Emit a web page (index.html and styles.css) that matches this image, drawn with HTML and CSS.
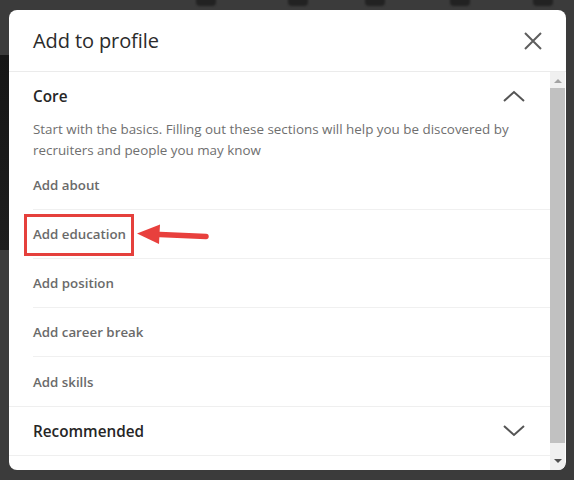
FILE: index.html
```html
<!DOCTYPE html>
<html>
<head>
<meta charset="utf-8">
<link rel="stylesheet" href="styles.css">
</head>
<body>
<div class="backdrop-icons">
  <span class="bi bi1"></span><span class="bi bi2"></span><span class="bi bi3"></span><span class="bi bi4"></span><span class="bi bi5"></span>
</div>
<div class="modal">
  <div class="modal-header">
    <h2 class="title">Add to profile</h2>
    <svg class="close" width="18" height="18" viewBox="0 0 18 18"><path d="M1 1L17 17M17 1L1 17" stroke="#5e5e5e" stroke-width="2" fill="none"/></svg>
  </div>
  <div class="modal-body">
    <div class="content">
      <section class="section">
        <div class="section-head core-head">
          <span class="section-title">Core</span>
          <svg class="chev" width="22" height="12" viewBox="0 0 22 12"><path d="M1 11L11 2L21 11" stroke="#555" stroke-width="2" fill="none"/></svg>
        </div>
        <p class="desc">Start with the basics. Filling out these sections will help you be discovered by recruiters and people you may know</p>
        <ul class="items">
          <li class="item">Add about</li>
          <li class="item highlighted">Add education
            <span class="hl-box"></span>
            <svg class="arrow" width="74" height="24" viewBox="0 0 74 24"><path d="M24 11.5L70 13.5" stroke="#e8403d" stroke-width="5.5" stroke-linecap="round" fill="none"/><path d="M1 10.5L24 1.5L23 21Z" fill="#e8403d"/></svg>
          </li>
          <li class="item">Add position</li>
          <li class="item">Add career break</li>
          <li class="item last">Add skills</li>
        </ul>
      </section>
      <section class="section">
        <div class="section-head">
          <span class="section-title">Recommended</span>
          <svg class="chev" width="22" height="12" viewBox="0 0 22 12"><path d="M1 1L11 10L21 1" stroke="#555" stroke-width="2" fill="none"/></svg>
        </div>
      </section>
    </div>
    <div class="scrollbar">
      <span class="sb-arrow up"></span>
      <span class="sb-thumb"></span>
      <span class="sb-arrow down"></span>
    </div>
  </div>
</div>
</body>
</html>
```
FILE: styles.css
```css
html, body {
  margin: 0;
  padding: 0;
}
body {
  width: 574px;
  height: 480px;
  overflow: hidden;
  position: relative;
  background:
    linear-gradient(#161616, #1e1e1e) 0 55px / 9px 195px no-repeat,
    #3b3b3b;
  font-family: "Open Sans", "Noto Sans", sans-serif;
  padding-top: 10px;
  box-sizing: border-box;
}
.backdrop-icons .bi {
  position: absolute;
  top: -6px;
  width: 20px;
  height: 12px;
  background: #222;
  border-radius: 4px;
  filter: blur(1px);
}
.bi1 { left: 196px; }
.bi2 { left: 288px; }
.bi3 { left: 365px; width: 24px; }
.bi4 { left: 450px; }
.bi5 { left: 533px; }

.modal {
  margin-left: 9px;
  width: 557px;
  height: 460px;
  background: #fff;
  border-radius: 8px;
  overflow: hidden;
  display: flex;
  flex-direction: column;
}
.modal-header {
  height: 61px;
  flex: none;
  display: flex;
  align-items: center;
  justify-content: space-between;
  padding: 0 24px 0 24px;
  border-bottom: 1px solid #ebebeb;
}
.title {
  margin: 0;
  font-size: 20px;
  font-weight: 400;
  color: #2b2b2b;
  letter-spacing: -0.1px;
}
.close {
  display: block;
}
.modal-body {
  flex: 1;
  display: flex;
  min-height: 0;
}
.content {
  flex: 1;
  min-width: 0;
}
.section {
  border-bottom: 1px solid #efefef;
}
.section-head {
  height: 48px;
  display: flex;
  align-items: center;
  justify-content: space-between;
  padding: 0 25px 0 24px;
}
.core-head {
  height: 47px;
}
.section-title {
  font-size: 15.3px;
  font-weight: 600;
  color: #262626;
}
.chev {
  display: block;
}
.desc {
  margin: 0;
  padding: 0 20px 0 24px;
  font-size: 13.4px;
  line-height: 21px;
  color: #6f6f6f;
}
.items {
  list-style: none;
  margin: 0;
  padding: 0;
}
.item {
  position: relative;
  margin-left: 24px;
  height: 48px;
  display: flex;
  align-items: center;
  font-size: 13.3px;
  font-weight: 600;
  color: #6a6a6a;
  border-bottom: 1px solid #f0f0f0;
}
.item.last {
  border-bottom: none;
  height: 49px;
}
.hl-box {
  position: absolute;
  left: -9px;
  top: 4px;
  width: 110px;
  height: 42px;
  box-sizing: border-box;
  border: 3px solid #e5403c;
}
.arrow {
  position: absolute;
  left: 103px;
  top: 13px;
}
.scrollbar {
  width: 15px;
  margin-right: 1px;
  flex: none;
  background: #f0f0f0;
  display: flex;
  flex-direction: column;
  align-items: center;
}
.sb-arrow {
  width: 0;
  height: 0;
  border-left: 4px solid transparent;
  border-right: 4px solid transparent;
  flex: none;
}
.sb-arrow.up {
  border-bottom: 4px solid #a3a3a3;
  margin-top: 7px;
  margin-bottom: 5px;
}
.sb-arrow.down {
  border-top: 4px solid #505050;
  margin-top: auto;
  margin-bottom: 7px;
}
.sb-thumb {
  width: 15px;
  height: 355px;
  background: #c1c1c1;
  flex: none;
}
```
